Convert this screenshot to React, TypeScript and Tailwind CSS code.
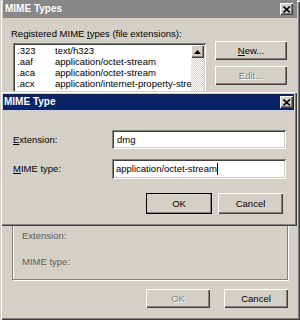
const raised = "shadow-[inset_1px_1px_#fff,inset_-1px_-1px_#404040,inset_-2px_-2px_#808080]"
const sunken = "shadow-[inset_1px_1px_#808080,inset_-1px_-1px_#fff,inset_2px_2px_#404040,inset_-2px_-2px_#d4d0c8]"
const windowEdge = "shadow-[inset_1px_1px_#d4d0c8,inset_2px_2px_#fff,inset_-1px_-1px_#404040,inset_-2px_-2px_#808080]"

// only the rows that show above the front dialog
const rows = [
  [".323", "text/h323"],
  [".aaf", "application/octet-stream"],
  [".aca", "application/octet-stream"],
  [".acx", "application/internet-property-stream"],
]

function CloseButton() {
  return (
    <div className={`w-[13px] h-[12px] bg-[#d4d0c8] flex items-center justify-center ${raised}`}>
      <svg width="8" height="7" viewBox="0 0 8 7">
        <path d="M0.5 0.5 L7 6.5 M7 0.5 L0.5 6.5" stroke="#000" strokeWidth="1.6" />
      </svg>
    </div>
  )
}

function Button({
  children,
  disabled,
  isDefault,
  className = "",
}: {
  children: React.ReactNode
  disabled?: boolean
  isDefault?: boolean
  className?: string
}) {
  return (
    <div
      className={`flex items-center justify-center bg-[#d4d0c8] ${raised} ${
        isDefault ? "outline outline-1 outline-black -outline-offset-1" : ""
      } ${disabled ? "text-[#808080] [text-shadow:1px_1px_#fff]" : "text-black"} ${className}`}
    >
      {children}
    </div>
  )
}

export default function App() {
  return (
    <div className="w-[300px] h-[320px] relative overflow-hidden bg-[#d4d0c8] font-['Liberation_Sans',Arial,sans-serif] text-[9.5px] leading-[12px] text-black">
      {/* Background window: MIME Types */}
      <div className={`h-full flex flex-col px-[3px] pb-[3px] ${windowEdge}`}>
        <div className="h-[18px] flex items-center justify-between pl-[2px] pr-[4px] bg-[#878787]">
          <span className="text-white font-bold text-[10px]">MIME Types</span>
          <CloseButton />
        </div>

        <div className="flex-1 flex flex-col pl-[10px] pr-[9px]">
          <div className="flex">
            <div className="flex flex-col">
              <div className="mt-[10px] -ml-[2px] h-[12px]">
                Registered MIME <span className="underline">t</span>ypes (file extensions):
              </div>
              <div className={`mt-[3px] w-[193px] h-[110px] bg-white flex p-[2px] ${sunken}`}>
                <div className="flex-1 overflow-hidden">
                  {rows.map(([ext, type]) => (
                    <div key={ext} className="flex leading-[11px] whitespace-nowrap">
                      <span className="w-[40px] pl-[2px] shrink-0">{ext}</span>
                      <span>{type}</span>
                    </div>
                  ))}
                </div>
                <div className="w-[13px] flex flex-col">
                  <div className={`h-[13px] bg-[#d4d0c8] flex items-center justify-center ${raised}`}>
                    <svg width="7" height="4" viewBox="0 0 7 4">
                      <path d="M3.5 0 L7 4 L0 4 Z" fill="#000" />
                    </svg>
                  </div>
                  <div className="flex-1 bg-[repeating-conic-gradient(#fff_0_25%,#d4d0c8_0_50%)] bg-[length:2px_2px]" />
                </div>
              </div>
            </div>
            <div className="ml-[9px] mt-[23px] flex flex-col gap-[6px]">
              <Button className="w-[72px] h-[19px]">
                <span>
                  <span className="underline">N</span>ew...
                </span>
              </Button>
              <Button disabled className="w-[72px] h-[19px]">
                Edit...
              </Button>
            </div>
          </div>

          <div className="mt-[8px] -ml-[1px] h-[119px] border border-[#808080] shadow-[1px_1px_#fff,inset_1px_1px_#fff] flex flex-col justify-end pl-[9px] pb-[11px] gap-[14px] text-[#5c5c5c]">
            <div>Extension:</div>
            <div>MIME type:</div>
          </div>

          <div className="mt-[9px] flex justify-end gap-[14px]">
            <Button disabled className="w-[64px] h-[19px]">
              OK
            </Button>
            <Button className="w-[64px] h-[19px]">Cancel</Button>
          </div>
        </div>
      </div>

      {/* Foreground dialog: MIME Type */}
      <div className={`absolute left-0 top-[91px] w-[297px] h-[135px] bg-[#d4d0c8] flex flex-col p-[3px] ${windowEdge}`}>
        <div className="h-[16px] flex items-center justify-between pl-[1px] pr-[1px] bg-[#0b2468]">
          <span className="text-white font-bold text-[10px]">MIME Type</span>
          <CloseButton />
        </div>

        <div className="flex flex-col pl-[10px] pr-[8px]">
          <div className="mt-[20px] flex items-center">
            <div className="w-[99px]">
              <span className="underline">E</span>xtension:
            </div>
            <div className={`flex-1 h-[19px] bg-white flex items-center pl-[5px] ${sunken}`}>dmg</div>
          </div>
          <div className="mt-[10px] flex items-center">
            <div className="w-[99px]">
              <span className="underline">M</span>IME type:
            </div>
            <div className={`flex-1 h-[20px] bg-white flex items-center pl-[4px] ${sunken}`}>
              application/octet-stream
              <span className="w-px h-[12px] bg-black" />
            </div>
          </div>
          <div className="mt-[14px] flex justify-end gap-[6px] pr-[3px]">
            <Button isDefault className="w-[66px] h-[21px]">
              OK
            </Button>
            <Button className="w-[65px] h-[21px]">Cancel</Button>
          </div>
        </div>
      </div>
    </div>
  )
}
